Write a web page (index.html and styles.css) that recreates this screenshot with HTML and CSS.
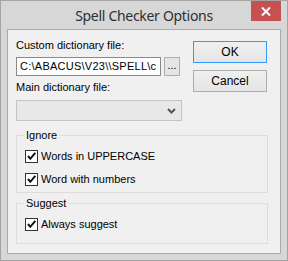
FILE: index.html
```html
<!DOCTYPE html>
<html lang="en">
<head>
  <meta charset="UTF-8" />
  <title>Spell Checker Options</title>
  <link rel="stylesheet" href="styles.css">
</head>
<body>
  <div class="window">
    <div class="titlebar">
      <span class="title">Spell Checker Options</span>
      <div class="close">
        <svg width="10" height="9" viewBox="0 0 10 9"><path d="M1 0.5 L9 8.5 M9 0.5 L1 8.5" stroke="#fff" stroke-width="2"/></svg>
      </div>
    </div>

    <div class="client">
      <div class="top">
        <div class="files">
          <div class="label">Custom dictionary file:</div>
          <div class="file-row">
            <div class="textbox">C:\ABACUS\V23\\SPELL\c</div>
            <div class="browse">...</div>
          </div>
          <div class="label label-main">Main dictionary file:</div>
          <div class="combo">
            <svg width="9" height="6" viewBox="0 0 9 6"><path d="M1 1 L4.5 4.5 L8 1" fill="none" stroke="#555" stroke-width="2"/></svg>
          </div>
        </div>
        <div class="buttons">
          <div class="btn btn-default">OK</div>
          <div class="btn">Cancel</div>
        </div>
      </div>

      <fieldset class="group group-ignore">
        <legend>Ignore</legend>
        <div class="check"><span class="box"><svg width="11" height="11" viewBox="0 0 11 11"><path d="M2 5 L4.3 7.8 L9.3 1.8" fill="none" stroke="#111" stroke-width="2"/></svg></span>Words in UPPERCASE</div>
        <div class="check"><span class="box"><svg width="11" height="11" viewBox="0 0 11 11"><path d="M2 5 L4.3 7.8 L9.3 1.8" fill="none" stroke="#111" stroke-width="2"/></svg></span>Word with numbers</div>
      </fieldset>

      <fieldset class="group group-suggest">
        <legend>Suggest</legend>
        <div class="check"><span class="box"><svg width="11" height="11" viewBox="0 0 11 11"><path d="M2 5 L4.3 7.8 L9.3 1.8" fill="none" stroke="#111" stroke-width="2"/></svg></span>Always suggest</div>
      </fieldset>
    </div>
  </div>
</body>
</html>
```

FILE: styles.css
```css
body {
  margin: 0;
  font-family: "Liberation Sans", Arial, sans-serif;
  font-size: 11px;
  line-height: 13px;
  color: #000;
}
.window {
  box-sizing: border-box;
  width: 288px; height: 261px;
  border: 1px solid #a4a4a4;
  background: #d7d7d7;
  padding: 0 6px 6px 6px;
  display: flex; flex-direction: column;
}
.titlebar {
  height: 28px;
  display: flex; justify-content: flex-end; align-items: flex-start;
  position: relative;
}
.title {
  position: absolute; left: -7px; right: -7px; top: 5px;
  text-align: center;
  font-family: "Noto Sans", "Open Sans", sans-serif;
  font-size: 14px; line-height: 20px;
  letter-spacing: -0.3px;
  color: #2f2f2f;
}
.close {
  width: 30px; height: 20px;
  background: #c75050;
  display: flex; align-items: center; justify-content: center;
  position: relative;
}
.client {
  flex: 1;
  border: 1px solid #ababab;
  background: #f0f0f0;
  padding: 9px 12px 0 8px;
  display: flex; flex-direction: column;
}
.top { display: flex; }
.files { width: 166px; }
.label { height: 13px; margin-bottom: 5px; }
.label-main { margin-top: 5px; margin-bottom: 6px; }
.file-row { display: flex; gap: 3px; }
.textbox {
  box-sizing: border-box;
  width: 145px; height: 19px;
  border: 1px solid #8a8a8a;
  background: #fff;
  padding: 2px 1px 0 3px;
  letter-spacing: 0.25px;
  white-space: nowrap; overflow: hidden;
}
.browse {
  box-sizing: border-box;
  width: 16px; height: 19px;
  border: 1px solid #adadad;
  background: #e5e5e5;
  text-align: center; line-height: 15px;
}
.combo {
  box-sizing: border-box;
  width: 166px; height: 21px;
  border: 1px solid #c4c4c4;
  background: #e8e8e8;
  display: flex; justify-content: flex-end; align-items: center;
  padding-right: 5px;
}
.buttons {
  margin-left: 11px; padding-top: 2px;
  display: flex; flex-direction: column; gap: 7px;
}
.btn {
  box-sizing: border-box;
  width: 74px; height: 22px;
  border: 1px solid #adadad;
  background: linear-gradient(#f0f0f0, #e5e5e5);
  text-align: center; line-height: 20px;
  font-size: 12px;
}
.btn-default { border-color: #3399ff; }
.group {
  margin: 0; width: 252px; box-sizing: border-box;
  border: 1px solid #dcdcdc;
  padding: 0 0 0 8px;
}
.group legend {
  padding: 0 2px; margin-left: -1px;
  line-height: 13px;
}
.group-ignore { margin-top: 8px; height: 64px; }
.group-suggest { margin-top: 4px; height: 47px; }
.check {
  display: flex; align-items: center;
  height: 13px;
}
.group-ignore .check:first-of-type { margin-top: 8px; }
.group-ignore .check + .check { margin-top: 10px; }
.group-suggest .check { margin-top: 8px; }
.box {
  box-sizing: border-box;
  width: 13px; height: 13px;
  border: 1px solid #333;
  background: #fff;
  margin-right: 3px;
  display: flex; align-items: center; justify-content: center;
}
```
